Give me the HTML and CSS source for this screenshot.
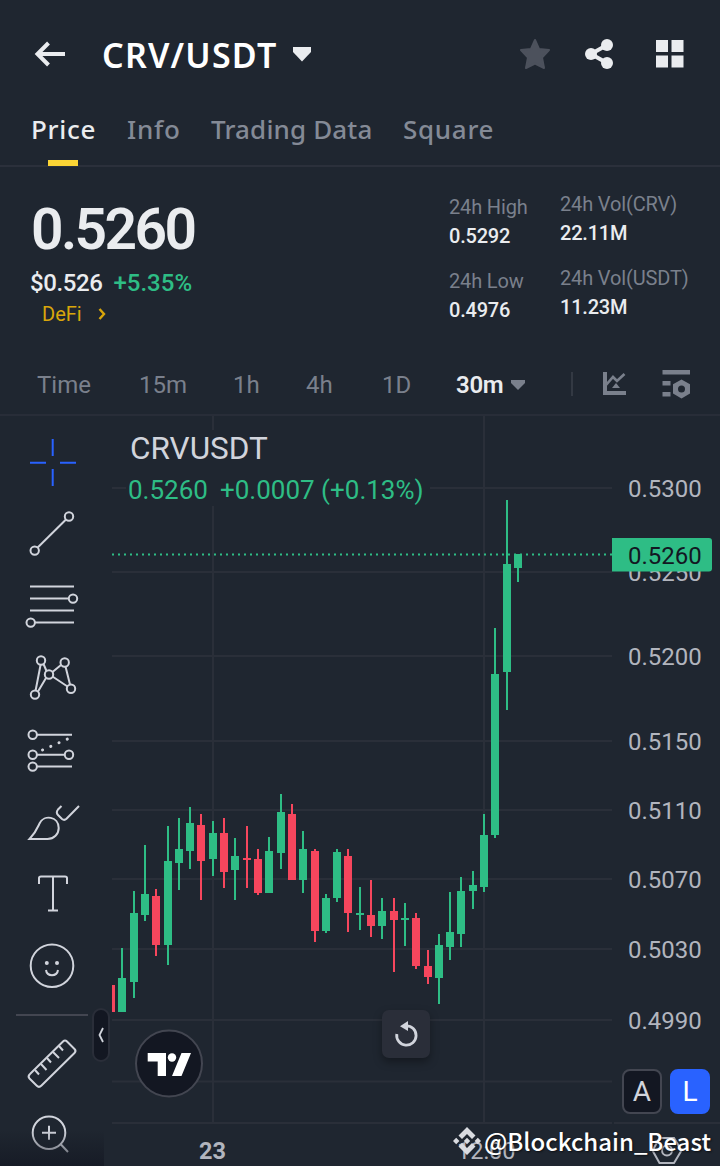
FILE: index.html
```html
<!DOCTYPE html>
<html lang="en">

<head>
    <meta charset="utf-8">
    <title>CRV/USDT</title>
    <link rel="stylesheet" href="styles.css">
</head>

<body>
    <header class="header">
        <svg class="back" width="32" height="28" viewBox="0 0 32 28">
            <path d="M31 14H5M14.500 3L3.500 14L14.500 25" fill="none" stroke="#eaecef" stroke-width="4" />
        </svg>
        <h1 class="pair">CRV/USDT</h1>
        <svg class="pair-arrow" width="18" height="15" viewBox="0 0 18 15">
            <path d="M0 0H18V5L9 14.500L0 5Z" fill="#eaecef" />
        </svg>
        <div class="header-icons">
            <svg width="32" height="32" viewBox="0 0 32 32">
                <path d="M16 2L20 11L30 12L23 19.500L25 30L16 25.500L7 30L9 19.500L2 12L12 11Z" fill="#4c515c" stroke="#4c515c" stroke-width="2" stroke-linejoin="round" />
            </svg>
            <svg width="30" height="32" viewBox="0 0 30 32">
                <path d="M23 7L7 16L23 25" fill="none" stroke="#eaecef" stroke-width="4" />
                <g fill="#eaecef">
                    <circle cx="23" cy="7" r="6" />
                    <circle cx="7" cy="16" r="6" />
                    <circle cx="23" cy="25" r="6" />
                </g>
            </svg>
            <svg width="28" height="28" viewBox="0 0 28 28">
                <path d="M0 0h12v12H0zM15.500 0h12v12h-12zM0 15.500h12v12H0zM15.500 15.500h12v12h-12z" fill="#eaecef" />
            </svg>
        </div>
    </header>

    <nav class="tabs">
        <a class="tab tab-price active">Price</a>
        <a class="tab tab-info">Info</a>
        <a class="tab tab-data">Trading Data</a>
        <a class="tab">Square</a>
    </nav>

    <section class="ticker">
        <div class="ticker-price">
            <div class="last">0.5260</div>
            <div class="change"><span class="usd">$0.526</span><span class="up">+5.35%</span></div>
            <div class="tag">
                <span>DeFi</span>
                <svg width="8" height="12" viewBox="0 0 8 12">
                    <path d="M1.500 1L6 6L1.500 11" fill="none" stroke="#d9a60b" stroke-width="2.400" />
                </svg>
            </div>
        </div>
        <dl class="stats stats-range">
            <dt>24h High</dt>
            <dd>0.5292</dd>
            <dt>24h Low</dt>
            <dd>0.4976</dd>
        </dl>
        <dl class="stats stats-volume">
            <dt>24h Vol(CRV)</dt>
            <dd>22.11M</dd>
            <dt>24h Vol(USDT)</dt>
            <dd>11.23M</dd>
        </dl>
    </section>

    <nav class="intervals">
        <span>Time</span>
        <span>15m</span>
        <span>1h</span>
        <span>4h</span>
        <span>1D</span>
        <span class="selected">30m
            <svg width="14" height="10" viewBox="0 0 14 10">
                <path d="M0 0H14V3L7 10L0 3Z" fill="#7a808c" />
            </svg>
        </span>
        <i class="separator"></i>
        <svg width="24" height="24" viewBox="0 0 24 24">
            <path d="M2 0V21H23" fill="none" stroke="#7a808c" stroke-width="4" />
            <path d="M3 13L10 5L14 9L21.500 2" fill="none" stroke="#7a808c" stroke-width="2.600" />
            <path d="M9 16L13 11L17 16Z" fill="#7a808c" />
        </svg>
        <svg width="29" height="30" viewBox="0 0 29 30">
            <path d="M0.500 1h27.500v4.500h-27.500zM0.500 12h8v4.500h-8zM0.500 23h8v4.500h-8z" fill="#7a808c" />
            <path d="M19.500 10.500L28 15.300V24.500L19.500 29.500L11 24.500V15.300Z" fill="#7a808c" />
            <circle cx="19.500" cy="20" r="3.500" fill="#1f2630" />
        </svg>
    </nav>

    <main class="chart">
        <aside class="tools">
            <svg class="tool" viewBox="0 0 112 72">
                <path d="M52.700 13V30M52.700 43V60M30 36.700H46M60 36.700H76" stroke="#2962ff" />
            </svg>
            <svg class="tool" viewBox="0 0 112 72">
                <path d="M37.700 49.500L66 21.500" />
                <circle cx="69" cy="18.500" r="4.200" />
                <circle cx="34.700" cy="52.600" r="4.200" />
            </svg>
            <svg class="tool" viewBox="0 0 112 72">
                <path d="M30 16.500H74M30 28.600H69M30 40.600H74M35 52.600H74" />
                <circle cx="73" cy="28.600" r="4.200" />
                <circle cx="30.700" cy="52.600" r="4.200" />
            </svg>
            <svg class="tool" viewBox="0 0 112 72">
                <path d="M40.600 22.700L35.600 48.500M43.500 22L46.500 29M52.500 30L61 23M65.500 24.500L70 42.500M52.500 34.500L67.500 44.500M38 49.500L46 36" />
                <circle cx="41" cy="18.500" r="4.200" />
                <circle cx="64.700" cy="20.500" r="4.200" />
                <circle cx="49" cy="32.500" r="4.200" />
                <circle cx="71" cy="46.800" r="4.200" />
                <circle cx="35" cy="52.600" r="4.200" />
            </svg>
            <svg class="tool" viewBox="0 0 112 72">
                <path d="M37 20.700H72M37 40.700H65M37 52.600H72" />
                <path d="M42.500 36L67.500 25" stroke-width="3" stroke-linecap="round" stroke-dasharray="0.100 8.900" />
                <circle cx="32.700" cy="20.700" r="4.200" />
                <circle cx="32.700" cy="40.700" r="4.200" />
                <circle cx="69" cy="40.700" r="4.200" />
                <circle cx="32.700" cy="52.600" r="4.200" />
            </svg>
            <svg class="tool" viewBox="0 0 112 72">
                <path d="M29.500 53C36 46 37 43 39.500 37.500C44 28 58.700 30.500 58.700 42C58.700 48 54 53 47.500 53Z" />
                <path d="M61.500 20L58 23.500C56.500 25.500 56.500 27.500 58 29L62 33C63.500 34.200 65 34.200 66.500 32.800L79 20" />
            </svg>
            <svg class="tool" viewBox="0 0 112 72">
                <path d="M39 26V20Q39 18.500 41 18.500H65Q67 18.500 67 20V26M53 18.500V52.600M48 52.600H58" />
            </svg>
            <svg class="tool" viewBox="0 0 112 72">
                <circle cx="52" cy="35.700" r="21.300" />
                <path d="M46 40C47 47 57 47 58 40" />
                <g fill="#d1d4dc" stroke="none">
                    <circle cx="46.800" cy="33" r="2" />
                    <circle cx="57" cy="33" r="2" />
                </g>
            </svg>
            <hr class="tools-divider">
            <svg class="tool" viewBox="0 0 112 72">
                <path d="M63 14.500Q65 12.500 67 14.500L74.500 22Q76.500 24 74.500 26L41.500 58.500Q39 61 36.800 58.800L29.500 51.500Q27.500 49.300 30 47Z" />
                <path d="M35 43L39 47.500M41 37L46.500 43M47 31L51 35.500M53 25L59 31M59 19L63 23.500" />
            </svg>
            <svg class="tool" viewBox="0 0 112 72">
                <circle cx="49" cy="33.700" r="16.300" />
                <path d="M42 33.700H56M49 26.700V40.700M60.500 45L68 53" />
            </svg>
            <div class="tools-fade"></div>
            <div class="collapse">
                <svg width="8" height="18" viewBox="0 0 8 18">
                    <path d="M6 2L2.500 9L6 16" fill="none" stroke="#d1d4dc" stroke-width="1.800" />
                </svg>
            </div>
        </aside>

        <svg id="plot" class="plot" width="608" height="750" viewBox="112 416 608 750">
            <g id="grid"></g>
            <rect x="126" y="430" width="304" height="76" fill="#1f2630" />
            <text class="symbol" x="130" y="459">CRVUSDT</text>
            <text class="quote" x="128" y="498.500">0.5260</text>
            <text class="quote" x="220" y="498.500">+0.0007 (+0.13%)</text>
            <g id="prices"></g>
            <path class="last-line" d="M112 554.500H612" />
            <g id="candles"></g>
            <path d="M612 538H709Q712 538 712 541V568.500Q712 571.500 709 571.500H612Z" fill="#2ebd85" />
            <text class="axis axis-last" x="628" y="563.500">0.5260</text>
            <text class="axis axis-time bold" x="199" y="1158.500">23</text>
            <text class="axis axis-time" x="457" y="1158.500">12:00</text>

            <!-- axis settings -->
            <path class="gear" d="M659.500 1138H674L681.500 1150.500L674 1163H659.500L652.500 1150.500Z" />
            <circle class="gear" cx="667" cy="1150.500" r="5" />

            <!-- logo -->
            <circle cx="169" cy="1063.500" r="33" fill="#131722" stroke="#434651" stroke-width="2" />
            <path d="M147.700 1053H166V1076H157.700V1061.500H147.700ZM181.500 1053H191L181.500 1076H172Z" fill="#fff" />
            <circle cx="172" cy="1057.500" r="4.200" fill="#fff" />
        </svg>

        <button class="reset">
            <svg width="28" height="28" viewBox="0 0 28 28">
                <path d="M4.800 14A9.700 9.700 0 1 0 14 5.800" fill="none" stroke="#d1d4dc" stroke-width="2.800" />
                <path d="M8 6.200L16 1V11Z" fill="#d1d4dc" />
            </svg>
        </button>
        <div class="scale-buttons">
            <button class="scale">A</button>
            <button class="scale scale-on">L</button>
        </div>
        <div class="watermark">
            <svg width="28" height="28" viewBox="0 0 28 28" fill="#d9dbe0">
                <path d="M14 0L22.500 8.500L19 12L14 7L9 12L5.500 8.500ZM14 28L22.500 19.500L19 16L14 21L9 16L5.500 19.500ZM14 10.800L17.200 14L14 17.200L10.800 14ZM3.200 10.800L6.400 14L3.200 17.200L0 14ZM24.800 10.800L28 14L24.800 17.200L21.600 14Z" />
            </svg>
            <span>@Blockchain_Beast</span>
        </div>
    </main>

    <script src="chart.js"></script>
</body>

</html>
```
FILE: styles.css
```css
* {
    box-sizing: border-box;
}
body {
    margin: 0;
    height: 1166px;
    overflow: hidden;
    background-color: #1f2630;
    color: #eaecef;
    font-family: Roboto, "Liberation Sans", sans-serif;
}
svg {
    display: block;
    flex: none;
}

.header {
    display: flex;
    align-items: center;
    height: 108px;
    padding: 0 36px 0 34px;
}
.pair {
    margin: 2px 0 0 36px;
    font-family: "Noto Sans", "Open Sans", sans-serif;
    font-size: 34px;
    font-weight: 600;
    letter-spacing: 1.2px;
    color: #fff;
}
.pair-arrow {
    margin-left: 15px;
}
.header-icons {
    display: flex;
    align-items: center;
    margin-left: auto;
}
.header-icons svg + svg {
    margin-left: 33px;
}
.header-icons svg:last-child {
    margin-left: 42px;
}

.tabs {
    display: flex;
    height: 59px;
    padding-left: 31px;
    border-bottom: 2px solid #2b303b;
    font-family: "Noto Sans", "Open Sans", sans-serif;
    font-size: 26px;
    font-weight: 500;
    letter-spacing: 0.7px;
    color: #848a96;
}
.tab {
    position: relative;
    line-height: 42px;
    white-space: nowrap;
}
.tab-price {
    width: 96px;
}
.tab-info {
    width: 84px;
}
.tab-data {
    width: 192px;
    letter-spacing: 0.15px;
}
.tab.active {
    color: #eaecef;
}
.tab.active::after {
    content: "";
    position: absolute;
    left: 17px;
    bottom: -1px;
    width: 30px;
    height: 6px;
    background-color: #fcd535;
}

.ticker {
    display: flex;
    height: 188px;
    padding-left: 31px;
}
.ticker-price {
    width: 418px;
}
.last {
    padding-top: 30px;
    font-size: 57px;
    line-height: 66px;
    font-weight: 600;
    letter-spacing: -2.6px;
}
.change {
    display: flex;
    gap: 11px;
    margin: 6px 0 0 -1px;
    font-size: 24px;
    line-height: 28px;
    font-weight: 500;
    letter-spacing: -0.4px;
}
.up {
    color: #2ebd85;
    letter-spacing: 0;
}
.tag {
    display: flex;
    align-items: center;
    gap: 16px;
    margin: 5px 0 0 11px;
    font-size: 20px;
    line-height: 24px;
    color: #d9a60b;
}
.stats {
    margin: 0;
    font-size: 20px;
    line-height: 28px;
    letter-spacing: -0.15px;
}
.stats-range {
    width: 111px;
    padding-top: 26px;
}
.stats-volume {
    padding-top: 23px;
}
.stats dt {
    color: #7a808c;
}
.stats dd {
    margin: 1px 0 17px;
    font-weight: 500;
    letter-spacing: -0.2px;
}

.intervals {
    display: grid;
    grid-template-columns: 102px 94px 73px 76px 74px 115px 32px 59px 29px;
    align-items: center;
    height: 61px;
    padding-left: 37px;
    border-bottom: 2px solid #282d38;
    font-size: 24px;
    color: #7a808c;
}
.intervals span {
    padding-top: 1px;
}
.intervals svg {
    margin-top: -1px;
}
.intervals .selected {
    display: flex;
    align-items: center;
    gap: 8px;
    font-weight: 600;
    letter-spacing: -0.3px;
    color: #eaecef;
}
.separator {
    width: 2px;
    height: 24px;
    margin-top: -2px;
    background-color: #333943;
}

.chart {
    position: relative;
    display: flex;
    height: 750px;
    overflow: hidden;
}
.tools {
    position: relative;
    width: 112px;
    padding-top: 10px;
}
.tool {
    width: 112px;
    height: 72px;
    fill: none;
    stroke: #d1d4dc;
    stroke-width: 2;
}
.tools-divider {
    width: 72px;
    height: 2px;
    margin: 12px 0 11px 16px;
    border: 0;
    background-color: #434651;
}
.tools-fade {
    position: absolute;
    left: 0;
    bottom: 0;
    width: 104px;
    height: 36px;
    background: linear-gradient(rgba(19, 23, 34, 0), rgba(19, 23, 34, 0.7));
}
.collapse {
    position: absolute;
    left: 92px;
    top: 592px;
    display: flex;
    align-items: center;
    justify-content: center;
    width: 18px;
    height: 54px;
    border: 2px solid #2a2e39;
    border-radius: 9px;
    background-color: #131722;
}

.symbol {
    font-size: 31.5px;
    fill: #d1d4dc;
}
.quote {
    font-size: 26px;
    fill: #2ebd85;
}
.axis {
    font-size: 24px;
    fill: #b2b5be;
}
.axis-last {
    fill: #131722;
}
.axis-time {
    font-size: 23.5px;
}
.bold {
    font-weight: 700;
}
.grid-line {
    stroke: #2a2f39;
    stroke-width: 2;
}
.last-line {
    stroke: #2ebd85;
    stroke-width: 2;
    stroke-dasharray: 2 4;
}
.gear {
    fill: none;
    stroke: #b2b5be;
    stroke-width: 2;
}

button {
    padding: 0;
    border: 0;
    font-family: inherit;
}
.reset {
    position: absolute;
    left: 382px;
    top: 594px;
    display: flex;
    align-items: center;
    justify-content: center;
    width: 48px;
    height: 48px;
    border-radius: 7px;
    background-color: #2a2e39;
    box-shadow: 0 4px 8px rgba(0, 0, 0, 0.35);
}
.scale-buttons {
    position: absolute;
    right: 10px;
    top: 653px;
    display: flex;
    gap: 8px;
}
.scale {
    width: 40px;
    height: 45px;
    border: 2px solid #434651;
    border-radius: 8px;
    background-color: #131722;
    color: #d1d4dc;
    font-size: 28px;
}
.scale-on {
    border-color: #2962ff;
    background-color: #2962ff;
    color: #fff;
}
.watermark {
    position: absolute;
    left: 453px;
    top: 707px;
    display: flex;
    align-items: center;
    gap: 3px;
    font-family: "Noto Sans CJK SC", sans-serif;
    font-size: 24px;
    line-height: 36px;
    font-weight: 500;
    color: #fff;
    text-shadow: 1px 1px 2px rgba(0, 0, 0, 0.6);
}
```
FILE: chart.js
```js
const svgNs = 'http://www.w3.org/2000/svg';
const colors = { up: '#2ebd85', down: '#f6465d' };

// price label, y
const levels = [
    ['0.5300', 488], ['0.5250', 572], ['0.5200', 656], ['0.5150', 741], ['0.5110', 810],
    ['0.5070', 879], ['0.5030', 949], ['0.4990', 1020], ['', 1081.5]
];

// direction, left, body top, body bottom, wick top, wick bottom
const candles = [
    ['up', 118, 978, 1012, 948, 1012],
    ['up', 130, 913, 982, 891, 998],
    ['up', 141, 894, 915, 845, 921],
    ['down', 152, 896, 945, 889, 956],
    ['up', 164, 861, 945, 826, 965],
    ['up', 175, 849, 863, 818, 890],
    ['up', 186, 823, 851, 807, 869],
    ['down', 197, 825, 861, 814, 900],
    ['up', 209, 833, 859, 821, 876],
    ['down', 220, 833, 872, 818, 888],
    ['up', 231, 856, 870, 838, 900],
    ['down', 243, 858, 860, 826, 888],
    ['down', 254, 859, 893, 849, 895],
    ['up', 265, 851, 893, 837, 893],
    ['up', 277, 812, 853, 794, 869],
    ['down', 288, 814, 880, 804, 880],
    ['up', 299, 849, 880, 831, 893],
    ['down', 311, 851, 931, 849, 942],
    ['up', 322, 898, 931, 894, 933],
    ['up', 333, 852, 898, 849, 902],
    ['down', 344, 856, 913, 849, 932],
    ['up', 356, 913, 915, 887, 930],
    ['down', 367, 915, 926, 880, 937],
    ['up', 378, 911, 926, 898, 939],
    ['down', 390, 911, 920, 898, 972],
    ['up', 401, 918, 920, 903, 946],
    ['down', 412, 918, 966, 913, 969],
    ['down', 424, 966, 977, 950, 984],
    ['up', 435, 945, 978, 934, 1004],
    ['up', 446, 932, 947, 892, 960],
    ['up', 457, 891, 934, 877, 947],
    ['up', 469, 885, 891, 871, 909],
    ['up', 480, 835, 887, 814, 892],
    ['up', 491, 674, 835, 628, 838],
    ['up', 503, 564, 672, 500, 710],
    ['up', 514, 554, 568, 554, 582]
];

const add = (parentId, name, attributes, text) => {
    const element = document.createElementNS(svgNs, name);
    for (const key in attributes) {
        element.setAttribute(key, attributes[key]);
    }
    if (text) {
        element.textContent = text;
    }
    document.getElementById(parentId).appendChild(element);
};

const addLine = (d) => add('grid', 'path', { class: 'grid-line', d });

levels.forEach(([label, y]) => {
    addLine(`M112 ${y}H612`);
    if (label) {
        add('prices', 'text', { class: 'axis', x: 628, y: y + 8.5 }, label);
    }
});
addLine('M213 416V1122');
addLine('M484 416V1122');
addLine('M112 1123H612M614 1123H720');

// the first candle is cut by the edge of the plot
add('candles', 'rect', { x: 112, y: 985, width: 3, height: 27, fill: colors.down });
candles.forEach(([direction, x, top, bottom, high, low]) => {
    const fill = colors[direction];
    add('candles', 'rect', { x: x + 3, y: high, width: 2, height: low - high, fill });
    add('candles', 'rect', { x, y: top, width: 8, height: bottom - top, fill });
});
```
